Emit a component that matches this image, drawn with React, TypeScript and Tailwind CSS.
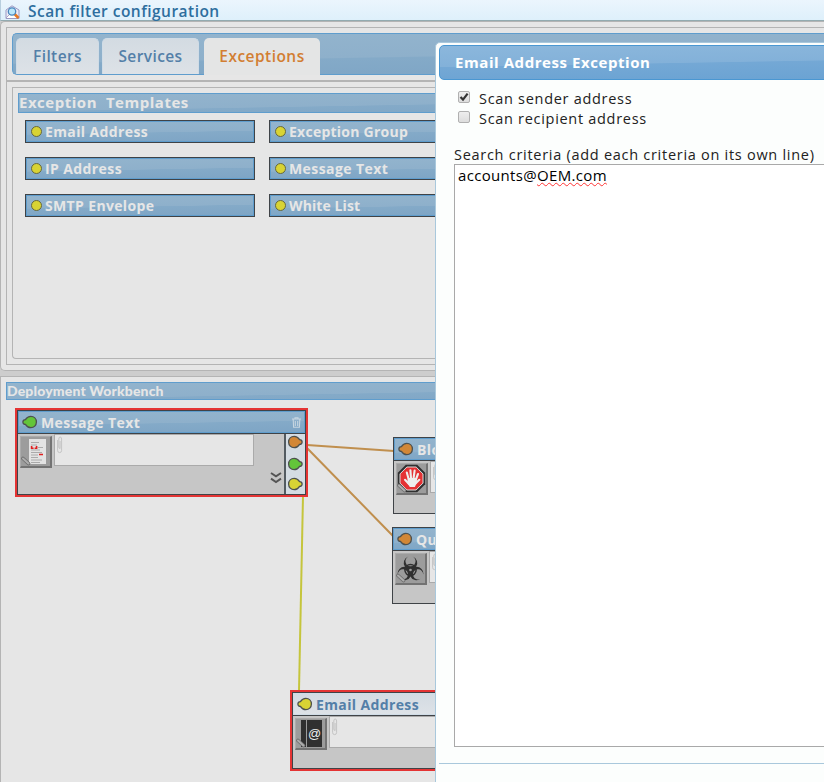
import React from "react";

const FONT = "font-['Open_Sans','Noto_Sans',sans-serif]";
const BAR = "bg-[linear-gradient(179deg,#93b4cd_0%,#8eb0cb_54%,#84aac8_56%,#7ea5c5_100%)]";
const LIGHT = "bg-[linear-gradient(180deg,#d3dbe2,#dde2e7)]";

function Dot() {
  return <span className="h-[11px] w-[11px] shrink-0 rounded-full border-[1.5px] border-[#66683f] bg-[#d8d334]" />;
}

function Port({ color, flip = false }: { color: string; flip?: boolean }) {
  return (
    <svg width="16" height="14" viewBox="0 0 16 14" className={flip ? "-scale-x-100" : ""}>
      <path
        d="M3.4 4.6C4.8 2.4 6.6 1.3 8.8 1.3C12 1.3 14.4 3.7 14.4 7C14.4 10.3 12 12.7 8.8 12.7C6.6 12.7 4.8 11.6 3.4 9.4C1.8 9.4 .9 8.4 .9 7C.9 5.6 1.8 4.6 3.4 4.6Z"
        fill={color}
        stroke="#4d514f"
        strokeWidth="1.3"
      />
    </svg>
  );
}

function Clip() {
  return (
    <svg width="7" height="18" viewBox="0 0 7 18" fill="none" stroke="#c4c4c4" strokeWidth="1">
      <path d="M.6 4V14.5Q.6 16.6 2.6 16.6Q4.6 16.6 4.6 14.5V3Q4.6 1 3.1 1Q1.8 1 1.8 3V11Q1.8 12.5 3.1 12.5V5" />
    </svg>
  );
}

function Wrench() {
  return (
    <g strokeLinecap="round">
      <path d="M2 21.5L7.5 26.5" stroke="#6c6c6c" strokeWidth="3.6" />
      <path d="M2 21.5L7.5 26.5" stroke="#adadad" strokeWidth="2" />
    </g>
  );
}

function NodeIcon({ kind }: { kind: "doc" | "stop" | "bio" | "mail" }) {
  return (
    <div className="h-8 w-8 shrink-0 border border-b-2 border-r-2 border-[#ababab] border-b-[#737373] border-r-[#737373] bg-[#9c9c9c]">
      <svg width="29" height="29" viewBox="0 0 29 29">
        {kind === "doc" && (
          <g>
            <rect x="8" y="2" width="17" height="25" fill="#e3e3e3" />
            <path
              d="M10 5.5H18M10 8H16M17 10.5H22M10 13H19M10 15.5H21M10 18H17M10 20.5H17M10 23H21M10 25.5H19"
              stroke="#aaa"
              strokeWidth="1"
            />
            <path d="M10.6 9V11.2H12.6M13.6 11.2H15.6V9M18 17.5H22" stroke="#df2020" strokeWidth="1.6" fill="none" />
          </g>
        )}
        {kind === "stop" && (
          <g>
            <path d="M8.8 .8H20.2L28.2 8.8V20.2L20.2 28.2H8.8L.8 20.2V8.8Z" fill="#303030" />
            <path d="M9.9 3H19.1L26 9.9V19.1L19.1 26H9.9L3 19.1V9.9Z" fill="#e43234" stroke="#ddd" strokeWidth="1" />
            <g stroke="#eee" strokeWidth="2.1" strokeLinecap="round">
              <path d="M11.6 15L9.8 8.5M14 14L13.4 6.2M16.6 14L17.6 6.6M18.7 16L21 10M12 20L8 15.8M18.5 19.5L22.3 15.8" />
            </g>
            <path d="M10.8 14H19.5L20 18.5L17.8 23H12.8L10.2 19Z" fill="#eee" />
          </g>
        )}
        {kind === "bio" && (
          <g>
            <circle cx="14.5" cy="16" r="5.6" fill="none" stroke="#303030" strokeWidth="1.5" />
            {[0, 120, 240].map((a) => (
              <path
                key={a}
                transform={`rotate(${a} 14.5 16)`}
                d="M12.3 2.6A6.8 6.8 0 1 0 16.7 2.6A5.1 5.1 0 1 1 12.3 2.6Z"
                fill="#303030"
              />
            ))}
            <circle cx="14.5" cy="16" r="1.3" fill="#9c9c9c" />
          </g>
        )}
        {kind === "mail" && (
          <g>
            <rect x="5" y="1" width="5" height="27" fill="#303030" />
            <rect x="11" y="1" width="15" height="27" fill="#303030" />
            <text x="18.5" y="18.5" textAnchor="middle" fontSize="13" fill="#eee" fontFamily="Liberation Sans, sans-serif">
              @
            </text>
          </g>
        )}
        <Wrench />
      </svg>
    </div>
  );
}

function Template({ label, track }: { label: string; track: string }) {
  return (
    <div className="h-[23px] border border-[#3f4347] bg-[#3f4347]">
      <div className={`flex h-[21px] items-center border border-[#5f9dcd] pl-[3.5px] ${BAR}`}>
        <Dot />
        <span className={`ml-[3.5px] whitespace-pre text-[14px] font-bold leading-[21px] text-[#e6e6e6] ${track}`}>{label}</span>
      </div>
    </div>
  );
}

interface NodeProps {
  label: string;
  kind: "doc" | "stop" | "bio" | "mail";
  color: string;
  light?: boolean;
  track: string;
  children?: React.ReactNode;
  tools?: React.ReactNode;
}

function NodeCard({ label, kind, color, light = false, track, children, tools }: NodeProps) {
  return (
    <div className="flex h-full flex-col border border-[#3f4347] bg-[#c6c6c6]">
      <div
        className={`flex h-[22px] shrink-0 items-center border pl-[3px] pr-[3px] ${light ? `border-[#d0dce6] ${LIGHT}` : `border-[#5f9dcd] ${BAR}`}`}
      >
        <Port color={color} />
        <span
          className={`ml-[3px] flex-1 whitespace-pre pt-[2px] text-[14px] font-bold leading-[20px] ${track} ${light ? "text-[#537fa8]" : "text-[#e6e6e6]"}`}
        >
          {label}
        </span>
        {tools}
      </div>
      <div className="flex flex-1 border-t border-[#3f4347]">
        <div className="pl-[2px] pt-[2px]">
          <NodeIcon kind={kind} />
        </div>
        <div className="ml-[2px] h-8 w-[200px] shrink-0 border border-[#aaa] bg-[#e6e6e6] pl-[2px] pt-[1px]">
          <Clip />
        </div>
        {children}
      </div>
    </div>
  );
}

function CheckRow({ label, checked, track }: { label: string; checked?: boolean; track: string }) {
  return (
    <div className="flex h-5 items-start">
      <span className="mt-px flex h-3 w-3 items-center justify-center rounded-[2px] border border-[#b0b0b0] bg-gradient-to-b from-[#eee] to-[#ddd]">
        {checked && (
          <svg width="10" height="10" viewBox="0 0 10 10" fill="none" stroke="#333" strokeWidth="2.2">
            <path d="M1.5 5L4 7.6L8.6 1.6" />
          </svg>
        )}
      </span>
      <span className={`ml-[9px] whitespace-pre text-[14.5px] leading-[18px] text-[#222] ${track}`}>{label}</span>
    </div>
  );
}

const TEMPLATES = [
  { label: "Email Address", track: "tracking-[0.38px]" },
  { label: "Exception Group", track: "tracking-[0.25px]" },
  { label: "IP Address", track: "tracking-[0.4px]" },
  { label: "Message Text", track: "tracking-[0.42px]" },
  { label: "SMTP Envelope", track: "tracking-[0.35px]" },
  { label: "White List", track: "tracking-[0.1px]" },
];

export default function App() {
  return (
    <div className={`relative flex h-[782px] w-[824px] flex-col overflow-hidden bg-[#cdcdcd] ${FONT}`}>
      <header className="flex h-[21px] shrink-0 items-center border-b border-l border-b-[#93abb0] border-l-[#b8cede] bg-gradient-to-b from-[#ebf5fd] to-[#def0fb] pl-1">
        <svg width="15" height="15" viewBox="0 0 15 15" className="mt-1">
          <path d="M1 5L7 .8L14 5V13.5H1Z" fill="#eceaf5" stroke="#9b99c3" />
          <path d="M1 13L5 9H10L14 13" fill="#fff" stroke="#aaa6c8" />
          <path d="M9.5 9L13.5 13" stroke="#e57824" strokeWidth="2.6" />
          <circle cx="7" cy="6.5" r="3.7" fill="#b9e7fb" stroke="#4b86bd" strokeWidth="1.3" />
        </svg>
        <h1 className="ml-2 mt-0.5 whitespace-pre text-[15.5px] font-semibold leading-[20px] tracking-[0.47px] text-[#2e6e9e]">
          Scan filter configuration
        </h1>
      </header>

      <section className="h-[350px] shrink-0 rounded-l-[5px] border border-r-0 border-[#b4b4b4] bg-[#e6e6e6] pl-[5px] pt-[5px]">
        <div className="h-[338px] border border-r-0 border-[#b4b4b4]">
          <div className="h-[54px] border-b-2 border-[#b4b4b4] pl-[5px] pt-[5px]">
            <div className={`flex h-[42px] rounded-l-[5px] border border-r-0 border-[#5f9dcd] pl-[3px] pt-1 ${BAR}`}>
              {[
                { label: "Filters", cls: "w-[83px] tracking-[0.4px]" },
                { label: "Services", cls: "ml-[3px] w-[97px] tracking-[0.4px]" },
              ].map((t) => (
                <div
                  key={t.label}
                  className={`h-[36px] rounded-t-[5px] border border-b-0 border-[#d0dce6] text-center text-[15.5px] font-semibold leading-[35px] text-[#537fa8] ${LIGHT} ${t.cls}`}
                >
                  {t.label}
                </div>
              ))}
              <div className="ml-[5px] h-[37px] w-[116px] rounded-t-[5px] bg-[#e4e5e5] text-center text-[15.5px] font-semibold leading-[37px] tracking-[0.45px] text-[#d27e32]">
                Exceptions
              </div>
            </div>
          </div>
          <div className="ml-[5px] mt-[5px] h-[272px] rounded-bl-[4px] border border-r-0 border-[#b4b4b4] pl-[5px] pt-[5px]">
            <h2 className={`h-5 whitespace-pre border border-[#5f9dcd] text-[15px] font-bold leading-[16px] tracking-[0.52px] text-[#e6e6e6] ${BAR}`}>
              Exception  Templates
            </h2>
            <div className="ml-[7px] mt-[7px] grid grid-cols-[230px_230px] gap-x-[14px] gap-y-[14px]">
              {TEMPLATES.map((t) => (
                <Template key={t.label} {...t} />
              ))}
            </div>
          </div>
        </div>
      </section>

      <section className="relative mt-[5px] flex-1 border-l border-t border-[#b4b4b4] bg-[#e6e6e6] pl-[5px] pt-[5px]">
        <h2 className={`h-[18px] whitespace-pre border border-[#5f9dcd] font-[Lato,sans-serif] text-[14px] font-black leading-[16px] tracking-[0.15px] text-[#e6e6e6] ${BAR}`}>
          Deployment Workbench
        </h2>
        <svg className="absolute -left-px -top-px" width="440" height="406" viewBox="0 376 440 406" fill="none" strokeWidth="2">
          <path d="M307 445L394 451M306 447L393 536" stroke="#c08f4e" />
          <path d="M303 496L299 691" stroke="#c5c53c" />
        </svg>
        <div className="absolute left-[14px] top-[31px] h-[89px] w-[293px] border-2 border-[#e43434]">
          <NodeCard
            label="Message Text"
            kind="doc"
            color="#63c53a"
            track="tracking-[0.42px]"
            tools={
              <svg width="9" height="11" viewBox="0 0 9 11" fill="none" stroke="#c7d6e1" strokeWidth="1.1">
                <path d="M0 2H9M3 2V.7H6V2M1.2 2.5L1.6 10.3H7.4L7.8 2.5M3.3 4V9M5.7 4V9" />
              </svg>
            }
          >
            <div className="flex flex-1 items-end justify-end pb-[10px] pr-[2px]">
              <svg width="12" height="12" viewBox="0 0 12 12" fill="none" stroke="#555" strokeWidth="2">
                <path d="M1 1L6 4.3L11 1M1 6.7L6 10L11 6.7" />
              </svg>
            </div>
            <div className="flex w-[21px] flex-col items-start border-l-2 border-[#535b61] bg-[#d4dce3] pl-px pt-[1px]">
              <Port color="#d28736" flip />
              <span className="mt-2 flex">
                <Port color="#63c53a" flip />
              </span>
              <span className="mt-1.5 flex">
                <Port color="#d8d334" flip />
              </span>
            </div>
          </NodeCard>
        </div>
        <div className="absolute left-[392px] top-[60px] h-[77px] w-[293px]">
          <NodeCard label="Block" kind="stop" color="#d28736" track="tracking-[0.4px]" />
        </div>
        <div className="absolute left-[391px] top-[150px] h-[77px] w-[293px]">
          <NodeCard label="Quarantine" kind="bio" color="#d28736" track="tracking-[0.4px]" />
        </div>
        <div className="absolute left-[289px] top-[313px] h-[81px] w-[293px] border-2 border-[#e43434]">
          <NodeCard label="Email Address" kind="mail" color="#d8d334" light track="tracking-[0.37px]" />
        </div>
      </section>

      <div className="absolute left-[435px] top-[42px] flex h-[745px] w-[400px] flex-col rounded-tl-[5px] border border-[#a9c8dc] bg-[#fcfefd] pl-[3px] pt-[2px]">
        <div className="h-[35px] shrink-0 rounded-l-[5px] border border-[#4a97d2] bg-[linear-gradient(179deg,#8bb7dc_0%,#83b1d9_52%,#74a8d5_54%,#6ba3d3_100%)] pl-[15px] text-[15px] font-bold leading-[32px] tracking-[0.57px] text-white">
          Email Address Exception
        </div>
        <div className="ml-[15px] mt-[10px] flex h-[673px] shrink-0 flex-col">
          <div className="h-10 pl-1">
            <CheckRow label="Scan sender address" checked track="tracking-[0.7px]" />
            <CheckRow label="Scan recipient address" track="tracking-[0.7px]" />
          </div>
          <label className="mt-[15px] h-[19px] whitespace-pre text-[14.5px] leading-[19px] tracking-[0.72px] text-[#222]">
            Search criteria (add each criteria on its own line)
          </label>
          <div className="h-[583px] border border-[#a9a9a9] bg-white pl-[3px] text-[15px] leading-[20px] tracking-[0.33px] text-black">
            accounts@
            <span className="underline decoration-[#f33] decoration-wavy decoration-1 underline-offset-1">OEM.com</span>
          </div>
        </div>
        <div className="border-t border-[#a9c8dc]" />
      </div>
    </div>
  );
}
